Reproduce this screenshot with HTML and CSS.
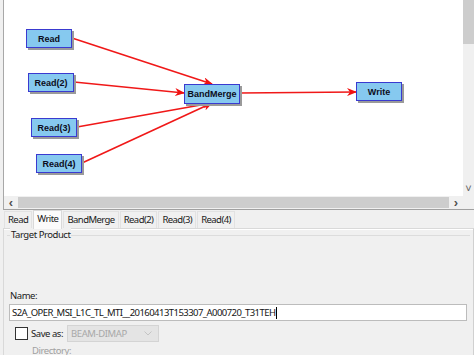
FILE: index.html
```html
<!DOCTYPE html>
<html>
<head>
<meta charset="utf-8">
<link rel="stylesheet" href="styles.css">
</head>
<body>
<div class="app">
  <div class="top">
    <div class="canvas">
      <svg class="edges" width="459" height="196" viewBox="0 0 459 196">
        <defs>
          <marker id="ah" markerWidth="10" markerHeight="8" refX="9" refY="4" orient="auto" markerUnits="userSpaceOnUse">
            <path d="M0,0 L10,4 L0,8 L3,4 Z" fill="#f01010"/>
          </marker>
        </defs>
        <g stroke="#f01818" stroke-width="1.6" fill="none" marker-end="url(#ah)">
          <line x1="68" y1="38" x2="208" y2="84"/>
          <line x1="70" y1="82" x2="180" y2="93"/>
          <line x1="73" y1="127" x2="208" y2="103"/>
          <line x1="78" y1="163" x2="208" y2="103"/>
          <line x1="236" y1="93" x2="352" y2="92"/>
        </g>
      </svg>
      <div class="node n-read">Read</div>
      <div class="node n-read2">Read(2)</div>
      <div class="node n-read3">Read(3)</div>
      <div class="node n-read4">Read(4)</div>
      <div class="node n-merge">BandMerge</div>
      <div class="node n-write">Write</div>
    </div>
    <div class="vscroll">
      <div class="vthumb"></div>
      <div class="vdown">&#x2C5;</div>
    </div>
    <div class="hscroll">
      <span class="harrow">&lsaquo;</span>
      <div class="hthumb"></div>
      <span class="harrow">&rsaquo;</span>
    </div>
    <div class="corner"></div>
  </div>
  <div class="tabs">
    <div class="tab">Read</div>
    <div class="tab active">Write</div>
    <div class="tab">BandMerge</div>
    <div class="tab">Read(2)</div>
    <div class="tab">Read(3)</div>
    <div class="tab">Read(4)</div>
  </div>
  <div class="panel">
    <div class="group">
      <div class="group-title">Target Product</div>
      <div class="spacer"></div>
      <div class="label">Name:</div>
      <div class="field">S2A_OPER_MSI_L1C_TL_MTI__20160413T153307_A000720_T31TEH<span class="caret"></span></div>
      <div class="saverow">
        <span class="check"></span>
        <span class="savelbl">Save as:</span>
        <div class="combo">BEAM-DIMAP<svg class="chev" width="8" height="5" viewBox="0 0 8 5"><path d="M0.5,0.5 L4,4 L7.5,0.5" stroke="#c4c4c4" fill="none"/></svg></div>
      </div>
      <div class="dirlbl">Directory:</div>
    </div>
  </div>
</div>
</body>
</html>
```
FILE: styles.css
```css
* { box-sizing: border-box; }
html, body { margin: 0; padding: 0; }
body {
  width: 474px;
  height: 355px;
  overflow: hidden;
  background: #f0f0f0;
  font-family: "Liberation Sans", Arial, sans-serif;
}
.app {
  width: 474px;
  height: 355px;
  display: flex;
  flex-direction: column;
  padding-left: 3px;
}
.top {
  display: grid;
  grid-template-columns: 1fr 11px;
  grid-template-rows: 196px 13px;
  border-left: 1px solid #a8a8a8;
  border-bottom: 1px solid #a0a0a0;
  height: 210px;
}
.canvas {
  position: relative;
  background: #ffffff;
  overflow: hidden;
}
.edges { position: absolute; left: 0; top: 0; }
.node {
  position: absolute;
  height: 19px;
  background: #86c9ef;
  border: 1px solid #3a3ad0;
  box-shadow: 2px 2px 0 #9a9a9a;
  font-size: 9px;
  font-weight: bold;
  color: #0c0c20;
  display: flex;
  align-items: center;
  justify-content: center;
}
.n-read { left: 22px; top: 29px; width: 46px; }
.n-read2 { left: 24px; top: 73px; width: 46px; }
.n-read3 { left: 27px; top: 118px; width: 46px; }
.n-read4 { left: 32px; top: 154px; width: 46px; }
.n-merge { left: 180px; top: 84px; width: 56px; height: 20px; }
.n-write { left: 352px; top: 82px; width: 46px; }
.vscroll {
  background: #f0f0f0;
  display: flex;
  flex-direction: column;
  justify-content: space-between;
  align-items: center;
}
.vthumb {
  width: 100%;
  height: 44px;
  background: #cdcdcd;
}
.vdown {
  font-size: 11px;
  color: #606060;
  line-height: 10px;
  margin-bottom: 3px;
}
.hscroll {
  background: #f0f0f0;
  display: flex;
  align-items: center;
  padding: 0 3px;
  gap: 3px;
}
.harrow {
  font-size: 13px;
  font-weight: bold;
  color: #505050;
  line-height: 12px;
  width: 8px;
  text-align: center;
}
.hthumb {
  flex: 1;
  height: 11px;
  background: #cdcdcd;
}
.corner { background: #f0f0f0; }
.tabs {
  display: flex;
  align-items: flex-end;
  height: 19px;
  padding-left: 1px;
}
.tab {
  font-family: "Noto Sans", "Liberation Sans", sans-serif;
  font-size: 9.5px;
  letter-spacing: -0.55px;
  color: #1a1a1a;
  height: 17px;
  line-height: 16px;
  padding: 0 3px 0 3px;
  margin-right: 1px;
  border: 1px solid #e2e2e2;
  border-bottom: none;
  background: #f0f0f0;
}
.tab.active {
  height: 19px;
  line-height: 15px;
  background: #fbfbfb;
  border-color: #d9d9d9;
  margin-bottom: -1px;
  position: relative;
  z-index: 1;
}
.panel {
  flex: 1;
  border-top: 1px solid #d9d9d9;
  border-right: 1px solid #d0d0d0;
  border-left: 1px solid #d9d9d9;
  box-shadow: inset 0 1px 0 #ffffff;
  background: #f0f0f0;
  padding: 6px 3px 0 3px;
}
.group {
  border-top: 1px solid #dcdcdc;
  display: flex;
  flex-direction: column;
}
.txt {
  font-family: "Noto Sans", "Liberation Sans", sans-serif;
}
.group-title, .label, .savelbl, .dirlbl {
  font-family: "Noto Sans", "Liberation Sans", sans-serif;
  font-size: 9.5px;
  letter-spacing: -0.45px;
  color: #1a1a1a;
}
.group-title {
  background: #f0f0f0;
  align-self: flex-start;
  margin-top: -8px;
  margin-left: 3px;
  padding: 0 1px;
  line-height: 14px;
}
.spacer { height: 47px; }
.label {
  padding-left: 3px;
  line-height: 14px;
}
.field {
  margin: 1px 3px 0 2px;
  height: 17px;
  background: #ffffff;
  border: 1px solid #bcbcbc;
  font-family: "Noto Sans", "Liberation Sans", sans-serif;
  font-size: 9.5px;
  letter-spacing: -0.55px;
  color: #141414;
  line-height: 15px;
  padding-left: 2px;
  white-space: nowrap;
  display: flex;
  align-items: center;
}
.caret {
  display: inline-block;
  width: 1px;
  height: 12px;
  background: #000;
  margin-left: 1px;
}
.saverow {
  display: flex;
  align-items: center;
  margin-top: 4px;
  padding-left: 8px;
  height: 17px;
}
.check {
  width: 13px;
  height: 13px;
  border: 1px solid #333;
  background: #fff;
  margin-right: 3px;
}
.savelbl {
  margin-right: 4px;
}
.combo {
  width: 92px;
  height: 17px;
  background: #e4e4e4;
  border: 1px solid #d4d4d4;
  font-family: "Noto Sans", "Liberation Sans", sans-serif;
  font-size: 9.5px;
  letter-spacing: -0.4px;
  color: #a8a8a8;
  display: flex;
  align-items: center;
  justify-content: space-between;
  padding: 0 6px 0 3px;
}
.dirlbl {
  color: #a0a0a0;
  padding-left: 25px;
  margin-top: 2px;
  line-height: 14px;
}
```
